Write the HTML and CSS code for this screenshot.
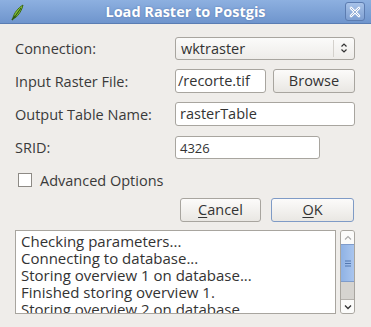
FILE: index.html
```html
<!DOCTYPE html>
<html>
<head>
<meta charset="utf-8">
<link rel="stylesheet" href="styles.css">
</head>
<body>
<div class="dialog">
  <div class="titlebar">
    <svg class="appicon" width="16" height="18" viewBox="0 0 16 18">
      <path d="M3 15 C4 10 8 5 13 2 C12 7 9 12 5 15 Z" fill="#8bc83a" stroke="#3d6a18" stroke-width="1"/>
      <path d="M4 15 L11 5" stroke="#2f5a10" stroke-width="1.2"/>
      <path d="M2 17 L5 13" stroke="#2f5a10" stroke-width="1.5"/>
    </svg>
    <div class="title">Load Raster to Postgis</div>
    <div class="close">
      <svg width="12" height="12" viewBox="0 0 12 12"><path d="M2 2 L10 10 M10 2 L2 10" stroke="#ffffff" stroke-width="2.6" stroke-linecap="round"/><path d="M2 2 L10 10 M10 2 L2 10" stroke="#7f9ccb" stroke-width="0.8" stroke-linecap="round"/></svg>
    </div>
  </div>
  <div class="content">
    <div class="form">
      <div class="label">Connection:</div>
      <div class="combo"><span class="combo-text">wktraster</span><span class="combo-arrow"><svg width="8" height="12" viewBox="0 0 8 12"><path d="M1.5 4.5 L4 2 L6.5 4.5 M1.5 7.5 L4 10 L6.5 7.5" fill="none" stroke="#333" stroke-width="1.2"/></svg></span></div>
      <div class="label">Input Raster File:</div>
      <div class="filerow"><div class="field short">/recorte.tif</div><div class="btn browse">Browse</div></div>
      <div class="label">Output Table Name:</div>
      <div class="field">rasterTable</div>
      <div class="label">SRID:</div>
      <div class="field srid">4326</div>
    </div>
    <div class="checkrow"><span class="check"></span><span class="checklabel">Advanced Options</span></div>
    <div class="buttons">
      <div class="btn action"><u>C</u>ancel</div>
      <div class="btn action ok"><u>O</u>K</div>
    </div>
    <div class="logrow">
      <div class="log">
        <div>Checking parameters...</div>
        <div>Connecting to database...</div>
        <div>Storing overview 1 on database...</div>
        <div>Finished storing overview 1.</div>
        <div>Storing overview 2 on database...</div>
      </div>
      <div class="scrollbar">
        <div class="sb-up"><svg width="8" height="6" viewBox="0 0 8 6"><path d="M1 4.5 L4 1.5 L7 4.5" fill="none" stroke="#aaa" stroke-width="1.1"/></svg></div>
        <div class="sb-thumb"><svg width="6" height="7" viewBox="0 0 6 7"><path d="M0 1 H6 M0 3.5 H6 M0 6 H6" stroke="#4a6fa8" stroke-width="0.9"/></svg></div>
        <div class="sb-track"></div>
        <div class="sb-down"><svg width="8" height="6" viewBox="0 0 8 6"><path d="M1 1.5 L4 4.5 L7 1.5" fill="none" stroke="#333" stroke-width="1.3"/></svg></div>
      </div>
    </div>
  </div>
</div>
</body>
</html>
```

FILE: styles.css
```css
html, body {
  margin: 0;
  padding: 0;
  background: #efedea;
}
.dialog {
  width: 371px;
  height: 327px;
  overflow: hidden;
  font-family: "Open Sans", "DejaVu Sans", sans-serif;
  color: #3a3a3a;
  background: #efedea;
  display: flex;
  flex-direction: column;
}
.titlebar {
  height: 23px;
  flex: none;
  background: linear-gradient(#8db0e0, #6f95cd);
  border-bottom: 1px solid #5a7db3;
  display: flex;
  align-items: center;
  position: relative;
}
.appicon {
  margin-left: 10px;
}
.title {
  position: absolute;
  left: 0;
  right: 0;
  text-align: center;
  color: #ffffff;
  font-weight: bold;
  font-size: 14.5px;
  line-height: 23px;
  text-shadow: 0 0 2px #5677ad;
}
.close {
  margin-left: auto;
  margin-right: 6px;
  width: 18px;
  height: 17px;
  border: 1px solid #5c7cb0;
  border-radius: 3px;
  background: linear-gradient(#a7c2e8, #7e9fd2);
  display: flex;
  align-items: center;
  justify-content: center;
  position: relative;
  z-index: 1;
}
.content {
  padding: 12px 16px 0 15px;
  display: flex;
  flex-direction: column;
}
.form {
  display: grid;
  grid-template-columns: 160px 180px;
  grid-auto-rows: 24px;
  row-gap: 9px;
  align-items: center;
}
.label {
  font-size: 14.5px;
  color: #3a3a3a;
}
.field {
  box-sizing: border-box;
  height: 24px;
  border: 1px solid #a8a59f;
  border-radius: 3px;
  background: #ffffff;
  font-size: 14.5px;
  line-height: 22px;
  padding-left: 4px;
  color: #333;
  overflow: hidden;
  white-space: nowrap;
}
.field.short {
  width: 91px;
  flex: none;
  padding-left: 2px;
}
.field.srid {
  width: 145px;
  font-size: 13px;
  height: 23px;
}
.combo {
  box-sizing: border-box;
  height: 23px;
  border: 1px solid #a8a59f;
  border-radius: 3px;
  background: linear-gradient(#fbfbfa, #eeece9);
  display: flex;
  align-items: center;
  font-size: 14.5px;
}
.combo-text {
  flex: 1;
  padding-left: 5px;
  color: #333;
}
.combo-arrow {
  width: 20px;
  height: 17px;
  border-left: 1px solid #d4d1cc;
  display: flex;
  align-items: center;
  justify-content: center;
}
.filerow {
  display: flex;
  gap: 7px;
  height: 24px;
}
.btn {
  box-sizing: border-box;
  border: 1px solid #a8a59f;
  border-radius: 3px;
  background: linear-gradient(#fcfbfa, #e9e7e3);
  font-size: 14.5px;
  color: #333;
  text-align: center;
  line-height: 22px;
  height: 24px;
}
.browse {
  width: 83px;
}
.checkrow {
  margin-top: 12px;
  display: flex;
  align-items: center;
  height: 18px;
}
.check {
  width: 12px;
  height: 12px;
  border: 1px solid #8d8a85;
  background: #ffffff;
  margin-left: 3px;
  margin-right: 8px;
}
.checklabel {
  font-size: 14.5px;
}
.buttons {
  margin-top: 9px;
  display: flex;
  justify-content: flex-end;
  gap: 10px;
  padding-right: 1px;
}
.action {
  width: 81px;
}
.ok {
  width: 83px;
  border-color: #7f9bc6;
}
.action u {
  text-decoration-thickness: 1px;
  text-underline-offset: 2px;
}
.logrow {
  margin-top: 8px;
  display: flex;
  gap: 4px;
  height: 84px;
}
.log {
  width: 323px;
  box-sizing: border-box;
  border: 1px solid #a8a59f;
  background: #ffffff;
  padding: 2px 0 0 5px;
  font-size: 15px;
  line-height: 17px;
  color: #333;
  overflow: hidden;
  white-space: nowrap;
}
.scrollbar {
  width: 15px;
  box-sizing: border-box;
  border: 1px solid #a8a59f;
  border-radius: 3px;
  background: #d9d7d3;
  display: flex;
  flex-direction: column;
  overflow: hidden;
}
.sb-up, .sb-down {
  height: 13px;
  background: #fbfbfa;
  display: flex;
  align-items: center;
  justify-content: center;
  flex: none;
}
.sb-thumb {
  height: 36px;
  flex: none;
  background: linear-gradient(90deg, #8fb2e4, #a9c5ee);
  border-top: 1px solid #7f9ccb;
  border-bottom: 1px solid #7f9ccb;
  display: flex;
  align-items: center;
  justify-content: center;
}
.sb-track {
  flex: 1;
  background: #d6d4d0;
}
.sb-down {
  border-top: 1px solid #b5b2ad;
}
```
